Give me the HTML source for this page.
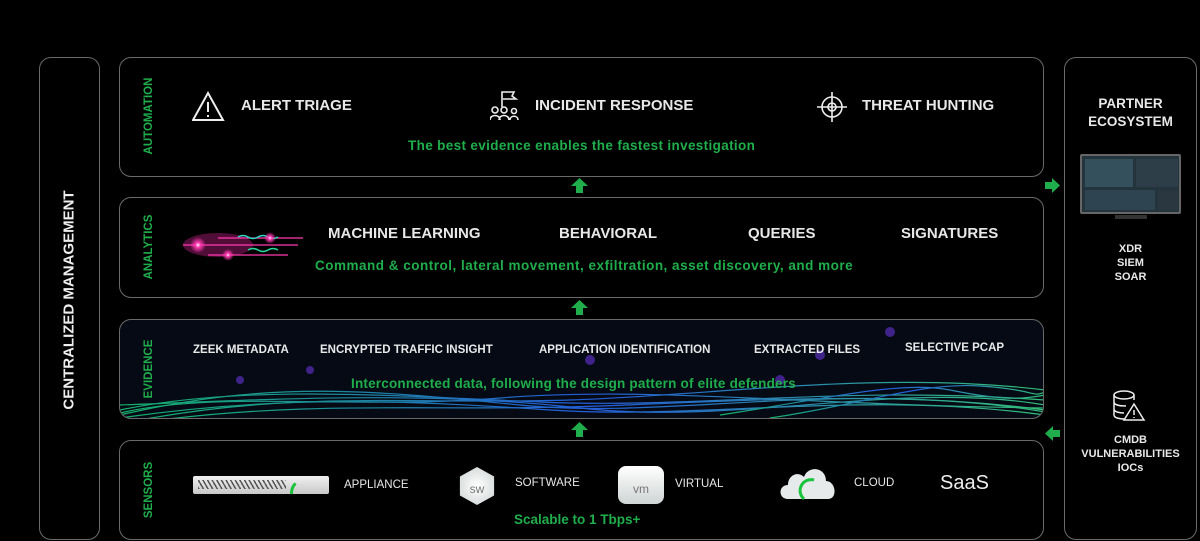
<!DOCTYPE html>
<html><head><meta charset="utf-8"><style>
*{margin:0;padding:0;box-sizing:border-box}
body{width:1200px;height:541px;background:#000;overflow:hidden;position:relative;font-family:"Liberation Sans",sans-serif;color:#e8e8e8}
.box{position:absolute;border:1.5px solid #6a6a6a;border-radius:12px}
.t{position:absolute;white-space:nowrap;font-weight:bold}
.h{font-size:15px}
.g{color:#1fae4b;font-size:14px}
.e{font-size:11.5px}
.s{font-size:11.5px;font-weight:normal}
.v{position:absolute;transform:translate(-50%,-50%) rotate(-90deg);color:#1fae4b;font-size:11.5px;font-weight:bold;white-space:nowrap}
</style></head><body>
<div class="box" style="left:39px;top:57px;width:61px;height:483px"></div>
<div class="v" style="left:69px;top:300px;color:#eee;font-size:15px">CENTRALIZED MANAGEMENT</div>

<div class="box" style="left:119px;top:57px;width:925px;height:120px"></div>
<div class="box" style="left:119px;top:197px;width:925px;height:101px"></div>
<div class="box" style="left:119px;top:319px;width:925px;height:100px;overflow:hidden;background:#050a14">
<svg width="925" height="100" style="position:absolute;left:0;top:0">
<defs><linearGradient id="w" x1="0" x2="1"><stop offset="0" stop-color="#1ad07a"/><stop offset=".5" stop-color="#2b6cff"/><stop offset="1" stop-color="#3adf8a"/></linearGradient></defs>
<g fill="none" stroke="url(#w)" stroke-width="1.2" opacity=".85">
<path d="M0 95 C150 60 250 70 400 85 S700 60 925 90"/>
<path d="M0 90 C120 65 260 75 420 82 S720 65 925 80"/>
<path d="M0 98 C160 75 280 80 430 90 S740 70 925 95"/>
<path d="M20 100 C180 70 300 85 450 80 S760 50 925 70"/>
<path d="M0 85 C140 80 300 70 460 88 S780 60 925 85"/>
<path d="M0 93 C100 70 230 90 380 78 S680 85 925 88"/>
<path d="M40 100 C200 80 320 92 480 86 S800 70 925 92"/>
<path d="M600 95 C700 80 780 60 830 70 S900 80 925 75"/>
<path d="M650 98 C740 85 800 62 860 66 S910 78 925 72"/>
</g>
<g fill="#7a3cff" opacity=".5"><circle cx="120" cy="60" r="4"/><circle cx="190" cy="50" r="4"/><circle cx="470" cy="40" r="5"/><circle cx="700" cy="35" r="5"/><circle cx="660" cy="60" r="5"/><circle cx="770" cy="12" r="5"/></g>
</svg></div>
<div class="box" style="left:119px;top:440px;width:925px;height:100px"></div>
<div class="box" style="left:1064px;top:57px;width:133px;height:483px"></div>

<div class="v" style="left:149px;top:116px">AUTOMATION</div>
<div class="v" style="left:149px;top:247px">ANALYTICS</div>
<div class="v" style="left:149px;top:369px">EVIDENCE</div>
<div class="v" style="left:149px;top:490px">SENSORS</div>

<svg style="position:absolute;left:192px;top:91px" width="33" height="31" fill="none" stroke="#eee" stroke-width="2"><path d="M16 2 L31 29 L1 29 Z"/><path d="M16 11 V21 M16 24 V26"/></svg>
<div class="t h" style="left:241px;top:97px">ALERT TRIAGE</div>
<svg style="position:absolute;left:490px;top:89px" width="34" height="32" fill="none" stroke="#eee" stroke-width="1.6"><path d="M12 18 V3 H24 L22 7 L26 10 H13"/><circle cx="5" cy="21" r="3"/><circle cx="14" cy="21" r="3"/><circle cx="24" cy="22" r="2.5"/><path d="M0 31 C0 25 10 25 10 31 M9 31 C9 25 19 25 19 31 M20 31 C20 26 28 26 28 31"/></svg>
<div class="t h" style="left:535px;top:97px">INCIDENT RESPONSE</div>
<svg style="position:absolute;left:817px;top:92px" width="30" height="30" fill="none" stroke="#eee" stroke-width="1.6"><circle cx="15" cy="15" r="10"/><circle cx="15" cy="15" r="4"/><path d="M15 0 V30 M0 15 H30"/></svg>
<div class="t h" style="left:862px;top:97px">THREAT HUNTING</div>
<div class="t g" style="left:408px;top:138px;font-size:13.5px;letter-spacing:.35px">The best evidence enables the fastest investigation</div>

<svg style="position:absolute;left:178px;top:228px" width="130" height="40"><defs><radialGradient id="p"><stop offset="0" stop-color="#fff"/><stop offset=".3" stop-color="#ff3ab0"/><stop offset="1" stop-color="#ff3ab0" stop-opacity="0"/></radialGradient></defs>
<ellipse cx="40" cy="17" rx="35" ry="12" fill="#a01a70" opacity=".5"/>
<path d="M5 17 H120 M30 27 H110 M40 10 H125" stroke="#ff3ab0" stroke-width="1.2"/>
<path d="M60 9 q5 -3 10 0 t10 0 t10 0 t10 0" stroke="#2ad8c0" fill="none" stroke-width="1.5"/>
<path d="M70 22 q5 -3 10 0 t10 0 t10 0" stroke="#2ad8a0" fill="none" stroke-width="1.5"/>
<circle cx="20" cy="17" r="8" fill="url(#p)"/><circle cx="92" cy="10" r="6" fill="url(#p)"/><circle cx="50" cy="27" r="6" fill="url(#p)"/></svg>
<div class="t h" style="left:328px;top:225px">MACHINE LEARNING</div>
<div class="t h" style="left:559px;top:225px">BEHAVIORAL</div>
<div class="t h" style="left:748px;top:225px">QUERIES</div>
<div class="t h" style="left:901px;top:225px">SIGNATURES</div>
<div class="t g" style="left:315px;top:258px;font-size:13.5px;letter-spacing:.5px">Command &amp; control, lateral movement, exfiltration, asset discovery, and more</div>

<div class="t e" style="left:193px;top:344px">ZEEK METADATA</div>
<div class="t e" style="left:320px;top:344px">ENCRYPTED TRAFFIC INSIGHT</div>
<div class="t e" style="left:539px;top:344px">APPLICATION IDENTIFICATION</div>
<div class="t e" style="left:754px;top:344px">EXTRACTED FILES</div>
<div class="t e" style="left:905px;top:342px">SELECTIVE PCAP</div>
<div class="t g" style="left:351px;top:376px;font-size:13.5px;letter-spacing:.2px">Interconnected data, following the design pattern of elite defenders</div>

<div style="position:absolute;left:193px;top:476px;width:136px;height:18px;background:linear-gradient(#f0f0f0,#c8c8c8);border-radius:2px;overflow:hidden">
<div style="position:absolute;left:5px;top:4px;width:88px;height:9px;background:repeating-linear-gradient(60deg,#555 0 1.5px,transparent 1.5px 4px)"></div>
<div style="position:absolute;left:97px;top:2px;width:30px;height:30px;border:3px solid #19c43c;border-radius:50%;border-right-color:transparent;border-top-color:transparent"></div></div>
<div class="t s" style="left:344px;top:479px">APPLIANCE</div>
<div style="position:absolute;left:458px;top:467px;width:38px;height:38px;background:radial-gradient(#fff,#c9cfcf);clip-path:polygon(50% 0,95% 25%,95% 75%,50% 100%,5% 75%,5% 25%);color:#777;font-size:12px;text-align:center;line-height:44px">sw</div>
<div class="t s" style="left:515px;top:477px">SOFTWARE</div>
<div style="position:absolute;left:618px;top:466px;width:46px;height:38px;background:linear-gradient(#fff,#cfd4d4);border-radius:8px;color:#777;font-size:12px;text-align:center;line-height:46px">vm</div>
<div class="t s" style="left:675px;top:478px">VIRTUAL</div>
<svg style="position:absolute;left:778px;top:463px" width="60" height="38"><path d="M10 36 C0 36 0 22 10 22 C10 12 20 8 26 14 C30 2 48 4 48 18 C58 18 60 36 50 36 Z" fill="#e6eaea"/><path d="M26 36 A11 11 0 0 1 36 17" stroke="#19c43c" stroke-width="3" fill="none"/></svg>
<div class="t s" style="left:854px;top:477px">CLOUD</div>
<div class="t" style="left:940px;top:472px;font-size:20px;font-weight:normal;color:#eee">SaaS</div>
<div class="t g" style="left:514px;top:512px;font-size:13.5px">Scalable to 1 Tbps+</div>

<svg style="position:absolute;left:571px;top:178px" width="17" height="15" fill="#1fae4b"><path d="M8.5 0 L17 8 H12 V15 H5 V8 H0 Z"/></svg>
<svg style="position:absolute;left:571px;top:300px" width="17" height="15" fill="#1fae4b"><path d="M8.5 0 L17 8 H12 V15 H5 V8 H0 Z"/></svg>
<svg style="position:absolute;left:571px;top:422px" width="17" height="15" fill="#1fae4b"><path d="M8.5 0 L17 8 H12 V15 H5 V8 H0 Z"/></svg>
<svg style="position:absolute;left:1045px;top:178px" width="15" height="15" fill="#1fae4b"><path d="M15 7.5 L7 0 V4 H0 V11 H7 V15 Z"/></svg>
<svg style="position:absolute;left:1045px;top:426px" width="15" height="15" fill="#1fae4b"><path d="M0 7.5 L8 0 V4 H15 V11 H8 V15 Z"/></svg>

<div class="t" style="left:1064px;width:133px;top:95px;text-align:center;font-size:13.5px;line-height:18px">PARTNER<br>ECOSYSTEM</div>
<div style="position:absolute;left:1080px;top:154px;width:101px;height:60px;background:#24343c;border:2px solid #666;border-radius:2px">
<div style="position:absolute;left:3px;top:3px;width:48px;height:28px;background:#34505c"></div>
<div style="position:absolute;left:54px;top:3px;width:42px;height:28px;background:#2e3e48"></div>
<div style="position:absolute;left:3px;top:34px;width:70px;height:20px;background:#2e4450"></div>
<div style="position:absolute;left:76px;top:34px;width:20px;height:20px;background:#2a3640"></div></div>
<div style="position:absolute;left:1115px;top:215px;width:32px;height:4px;background:#333"></div>
<div class="t" style="left:1064px;width:133px;top:242px;text-align:center;font-size:11px;line-height:14px">XDR<br>SIEM<br>SOAR</div>
<svg style="position:absolute;left:1112px;top:390px" width="34" height="32" fill="none" stroke="#eee" stroke-width="1.5"><ellipse cx="12" cy="5" rx="10" ry="4"/><path d="M2 5 V25 C2 28 8 29 12 29 M2 12 C2 15 8 16 14 16 M2 19 C2 22 8 23 12 23 M22 5 V10"/><path d="M22 14 L32 30 H12 Z"/><path d="M22 20 V25 M22 27 V28"/></svg>
<div class="t" style="left:1064px;width:133px;top:433px;text-align:center;font-size:11px;line-height:14px">CMDB<br>VULNERABILITIES<br>IOCs</div>
</body></html>
